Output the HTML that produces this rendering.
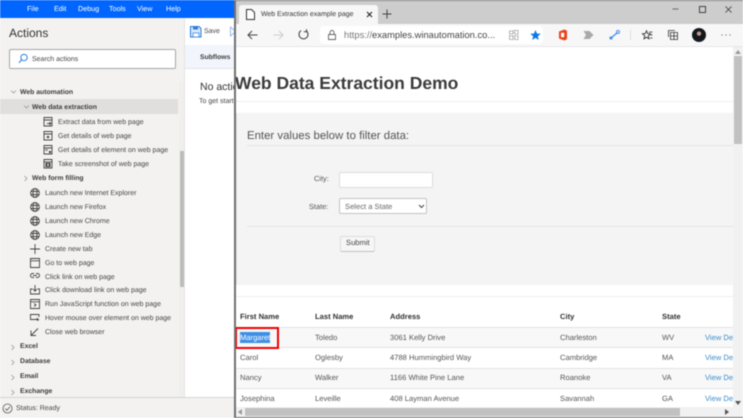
<!DOCTYPE html>
<html><head><meta charset="utf-8"><style>
html,body{margin:0;padding:0;background:#fff}
#w{width:743px;height:418px;overflow:hidden;position:relative;background:#fff;font-family:"Liberation Sans",sans-serif;filter:blur(.4px);text-rendering:geometricPrecision}
.a,.t{position:absolute}
.t{white-space:nowrap;line-height:12px}
.s{font-size:7px;color:#444;margin-top:1px}
.b{font-size:6.85px;color:#3c3c3c;font-weight:bold;margin-top:1px}
.p{font-size:7.6px;color:#555}
.h{font-size:7.6px;color:#333;font-weight:bold}
.l{font-size:7.6px;color:#3a8ccb}
svg{position:absolute;overflow:visible}
.i{fill:none;stroke:#444;stroke-width:.9}
</style></head><body><div id="w">
<!-- sidebar bg -->
<div class="a" style="left:0;top:0;width:185px;height:418px;background:#f3f2f1"></div>
<div class="a" style="left:185px;top:18px;width:50px;height:380px;background:#fff"></div>
<div class="a" style="left:0;top:0;width:743px;height:18px;background:#0066ff"></div>
<div class="t" style="left:27px;top:3px;font-size:7.2px;color:#fff">File</div>
<div class="t" style="left:54px;top:3px;font-size:7.2px;color:#fff">Edit</div>
<div class="t" style="left:78px;top:3px;font-size:7.2px;color:#fff">Debug</div>
<div class="t" style="left:109px;top:3px;font-size:7.2px;color:#fff">Tools</div>
<div class="t" style="left:137px;top:3px;font-size:7.2px;color:#fff">View</div>
<div class="t" style="left:166px;top:3px;font-size:7.2px;color:#fff">Help</div>
<div class="t" style="left:9px;top:26px;font-size:12px;line-height:14px;color:#333">Actions</div>
<div class="a" style="left:9px;top:49px;width:165px;height:18px;background:#fff;border:1px solid #a6a6a6;border-radius:2px"></div>
<svg style="left:18px;top:53px" width="10" height="11"><circle cx="6" cy="4.5" r="3.2" fill="none" stroke="#1a73d8" stroke-width=".9"/><path d="M3.6 6.8L1 9.8" stroke="#1a73d8" stroke-width="1"/></svg>
<div class="t s" style="left:32px;top:53px">Search actions</div>
<!-- tree -->
<div class="a" style="left:0;top:99px;width:178px;height:15px;background:#e1dfdd"></div>
<svg style="left:10px;top:89px" width="8" height="6"><path d="M1 1.5L3.5 4L6 1.5" fill="none" stroke="#999" stroke-width=".8"/></svg>
<div class="t b" style="left:20px;top:86px">Web automation</div>
<svg style="left:23px;top:104px" width="8" height="6"><path d="M1 1.5L3.5 4L6 1.5" fill="none" stroke="#999" stroke-width=".8"/></svg>
<div class="t b" style="left:32px;top:101px">Web data extraction</div>
<div class="t s" style="left:58px;top:116px">Extract data from web page</div>
<div class="t s" style="left:58px;top:130px">Get details of web page</div>
<div class="t s" style="left:58px;top:144px">Get details of element on web page</div>
<div class="t s" style="left:58px;top:158px">Take screenshot of web page</div>
<svg style="left:43px;top:117px" width="10" height="10"><path class="i" d="M1 .5H9V9H1ZM1 3H9M4 6.5H8M6.5 5L8 6.5L6.5 8"/></svg>
<svg style="left:43px;top:131px" width="10" height="10"><path class="i" d="M1 .5H9V9H1ZM1 3H9M5 4.5V7.5M3.5 6H6.5"/></svg>
<svg style="left:43px;top:145px" width="10" height="10"><path class="i" d="M1 .5H9V9H1ZM1 3H9"/><rect x="2" y="4" width="3" height="2" fill="#999"/><rect x="6" y="6" width="2" height="2" fill="#333"/></svg>
<svg style="left:43px;top:159px" width="10" height="10"><path class="i" d="M1 .5H9V9H1ZM1 3H9"/><rect x="2.5" y="4" width="5" height="4" fill="#333"/><circle cx="5" cy="6" r="1.1" fill="#ddd"/></svg>
<svg style="left:23px;top:175px" width="6" height="8"><path d="M1.5 1L4 3.5L1.5 6" fill="none" stroke="#999" stroke-width=".8"/></svg>
<div class="t b" style="left:32px;top:172px">Web form filling</div>
<div class="t s" style="left:45px;top:187px">Launch new Internet Explorer</div>
<div class="t s" style="left:45px;top:201px">Launch new Firefox</div>
<div class="t s" style="left:45px;top:215px">Launch new Chrome</div>
<div class="t s" style="left:45px;top:229px">Launch new Edge</div>
<div class="t s" style="left:45px;top:243px">Create new tab</div>
<div class="t s" style="left:45px;top:257px">Go to web page</div>
<div class="t s" style="left:45px;top:271px">Click link on web page</div>
<div class="t s" style="left:45px;top:284px">Click download link on web page</div>
<div class="t s" style="left:45px;top:298px">Run JavaScript function on web page</div>
<div class="t s" style="left:45px;top:312px">Hover mouse over element on web page</div>
<div class="t s" style="left:45px;top:326px">Close web browser</div>
<svg style="left:30px;top:188px" width="10" height="10"><g class="i" stroke-width=".8"><circle cx="5" cy="5" r="4.4"/><ellipse cx="5" cy="5" rx="2" ry="4.4"/><path d="M.8 3.5H9.2M.8 6.5H9.2"/></g></svg>
<svg style="left:30px;top:202px" width="10" height="10"><g class="i" stroke-width=".8"><circle cx="5" cy="5" r="4.4"/><ellipse cx="5" cy="5" rx="2" ry="4.4"/><path d="M.8 3.5H9.2M.8 6.5H9.2"/></g></svg>
<svg style="left:30px;top:216px" width="10" height="10"><g class="i" stroke-width=".8"><circle cx="5" cy="5" r="4.4"/><ellipse cx="5" cy="5" rx="2" ry="4.4"/><path d="M.8 3.5H9.2M.8 6.5H9.2"/></g></svg>
<svg style="left:30px;top:230px" width="10" height="10"><g class="i" stroke-width=".8"><circle cx="5" cy="5" r="4.4"/><ellipse cx="5" cy="5" rx="2" ry="4.4"/><path d="M.8 3.5H9.2M.8 6.5H9.2"/></g></svg>
<svg style="left:30px;top:244px" width="10" height="10"><path class="i" d="M0 5H10M5 0V10"/></svg>
<svg style="left:30px;top:258px" width="10" height="10"><path class="i" d="M.5 .5H9.5V9.5H.5ZM.5 2.8H9.5"/></svg>
<svg style="left:30px;top:272px" width="10" height="8"><path class="i" d="M4 1.5H2.5A2 2 0 0 0 2.5 5.5H4M6 1.5H7.5A2 2 0 0 1 7.5 5.5H6M3 3.5H7"/></svg>
<svg style="left:30px;top:285px" width="10" height="10"><path class="i" d="M5 0V6M3 4L5 6.2L7 4M2.5 4H.5V9H9.5V4H7.5"/></svg>
<svg style="left:30px;top:299px" width="10" height="10"><path class="i" d="M.5 .5H9.5V9.5H.5ZM.5 2.8H9.5M4 4.5L6 6L4 7.5"/></svg>
<svg style="left:30px;top:313px" width="10" height="10"><path class="i" d="M7 6.5H.5V1.5H9V4"/><path d="M6.5 4.5L9.5 7L8 7.3L7.5 8.5Z" fill="#333"/></svg>
<svg style="left:30px;top:327px" width="10" height="10"><path class="i" d="M8 1.5L1 8.5M1 3.5V8.5H6"/></svg>
<svg style="left:10px;top:344px" width="6" height="8"><path d="M1.5 1L4 3.5L1.5 6" fill="none" stroke="#999" stroke-width=".8"/></svg>
<div class="t b" style="left:20px;top:340px">Excel</div>
<svg style="left:10px;top:359px" width="6" height="8"><path d="M1.5 1L4 3.5L1.5 6" fill="none" stroke="#999" stroke-width=".8"/></svg>
<div class="t b" style="left:20px;top:355px">Database</div>
<svg style="left:10px;top:374px" width="6" height="8"><path d="M1.5 1L4 3.5L1.5 6" fill="none" stroke="#999" stroke-width=".8"/></svg>
<div class="t b" style="left:20px;top:370px">Email</div>
<svg style="left:10px;top:389px" width="6" height="8"><path d="M1.5 1L4 3.5L1.5 6" fill="none" stroke="#999" stroke-width=".8"/></svg>
<div class="t b" style="left:20px;top:385px">Exchange</div>
<!-- sidebar scrollbar -->
<div class="a" style="left:179px;top:81px;width:6px;height:317px;background:#f0efee"></div>
<div class="a" style="left:180px;top:151px;width:4px;height:136px;background:#bdbdbd"></div>
<div class="a" style="left:184px;top:18px;width:1px;height:380px;background:#e4e4e4"></div>
<!-- status -->
<div class="a" style="left:0;top:397px;width:235px;height:21px;background:#f3f2f1;border-top:1px solid #d4d4d4;box-sizing:border-box"></div>
<svg style="left:2px;top:403px" width="11" height="11"><circle cx="5.5" cy="5.5" r="4.5" fill="none" stroke="#555" stroke-width=".8"/><path d="M3.2 5.6L5 7.3L7.8 3.8" fill="none" stroke="#555" stroke-width=".8"/></svg>
<div class="t s" style="left:16px;top:402px">Status: Ready</div>
<!-- center -->
<svg style="left:190px;top:26px" width="12" height="12"><path d="M.5 .5H9L11 2.5V11H.5Z" fill="#d8e8fb" stroke="#2b7de0"/><rect x="3" y="7" width="6" height="4" fill="#fff" stroke="#2b7de0" stroke-width=".7"/><rect x="3" y="1" width="5" height="2.5" fill="#2b7de0"/></svg>
<div class="t s" style="left:204px;top:25px">Save</div>
<svg style="left:230px;top:26px" width="6" height="11"><path d="M.5 1L5.5 5.5L.5 10Z" fill="none" stroke="#8ab8ee" stroke-width=".9"/></svg>
<div class="a" style="left:185px;top:45px;width:50px;height:24px;background:#f2f6fc;border-bottom:1px solid #e3e3e3;box-sizing:border-box"></div>
<div class="t b" style="left:200px;top:51px">Subflows</div>
<div class="t" style="left:200px;top:81px;font-size:10.5px;color:#333">No actio</div>
<div class="t s" style="left:199px;top:95px">To get start</div>
<!-- browser -->
<div class="a" style="left:234px;top:0;width:2px;height:418px;background:#707070"></div>
<div class="a" style="left:236px;top:0;width:507px;height:418px;background:#fff;overflow:hidden">
<div class="a" style="left:0;top:0;width:507px;height:1px;background:#808080"></div>
<div class="a" style="left:0;top:1px;width:507px;height:23px;background:#cdcdcd"></div>
<div class="a" style="left:3px;top:5px;width:139px;height:19px;background:#f7f7f7;border-radius:3px 3px 0 0"></div>
<svg style="left:10px;top:9px" width="9" height="11"><path d="M.5 .5H5.5L8.5 3.5V10.5H.5Z" fill="#fff" stroke="#333"/></svg>
<div class="t" style="left:25px;top:8.5px;font-size:6.95px;color:#333">Web Extraction example page</div>
<svg style="left:130px;top:11px" width="7" height="7"><path d="M1 1L6 6M6 1L1 6" stroke="#222" stroke-width="1.1"/></svg>
<svg style="left:146px;top:9px" width="10" height="10"><path d="M5 .5V9.5M.5 5H9.5" stroke="#444" stroke-width="1"/></svg>
<svg style="left:436px;top:8px" width="8" height="2"><path d="M.5 1H6.5" stroke="#777" stroke-width="1.2"/></svg>
<div class="a" style="left:463px;top:6px;width:5px;height:5px;border:1px solid #444"></div>
<svg style="left:489px;top:6px" width="8" height="8"><path d="M.5 .5L6.5 6.5M6.5 .5L.5 6.5" stroke="#555" stroke-width=".9"/></svg>
<div class="a" style="left:0;top:24px;width:507px;height:23px;background:#f7f7f7;border-bottom:1px solid #e6e6e6;box-sizing:border-box"></div>
<svg style="left:11px;top:30px" width="11" height="10"><path d="M10.5 5H1M5 1L1 5L5 9" fill="none" stroke="#444" stroke-width="1"/></svg>
<svg style="left:37px;top:30px" width="11" height="10"><path d="M.5 5H10M6 1L10 5L6 9" fill="none" stroke="#ccc" stroke-width="1"/></svg>
<svg style="left:62px;top:29px" width="11" height="11"><path d="M3 1.6A4.5 4.5 0 1 0 8 1.6M8.5 .2V2.8H5.8" fill="none" stroke="#444" stroke-width="1"/></svg>
<div class="a" style="left:84px;top:26px;width:223px;height:18px;background:#fff;border-radius:4px"></div>
<svg style="left:92px;top:30px" width="8" height="10"><path d="M.5 4.5H7.5V9.5H.5ZM2 4.5V2.5A2 2 0 0 1 6 2.5V4.5" fill="none" stroke="#666" stroke-width=".9"/></svg>
<div class="t" style="left:108px;top:29px;font-size:9.35px;color:#444"><span style="color:#777">https://</span>examples.winautomation.co...</div>
<svg style="left:273px;top:30px" width="10" height="10"><path d="M.5 1H4V4H.5ZM5.5 .5H9V4H5.5ZM.5 6H4V9.5H.5ZM5.5 6H9V9.5H5.5Z" fill="none" stroke="#999" stroke-width="1" stroke-dasharray="1.5 .7"/></svg>
<svg style="left:294px;top:30px" width="11" height="10"><path d="M5.5 0L7 3.6L10.8 3.8L7.8 6.2L8.8 10L5.5 7.9L2.2 10L3.2 6.2L.2 3.8L4 3.6Z" fill="#0a78e6"/></svg>
<svg style="left:322px;top:29px" width="10" height="12"><path d="M1 2.5L6.5.5L9 1.8V10L6.5 11.5L1 9.5Z" fill="#e8431b"/><path d="M3 3.8H6.2V8.2H3Z" fill="#fff"/></svg>
<svg style="left:347px;top:31px" width="11" height="8"><path d="M.5 0H6.5L10.5 4L6.5 8H.5L3 4Z" fill="#aaa"/></svg>
<svg style="left:373px;top:30px" width="11" height="10"><path d="M2 8L8.5 2.5" stroke="#4f8ff0" stroke-width="1.4"/><circle cx="2" cy="8" r="1.6" fill="#4f8ff0"/><circle cx="9" cy="2" r="1.5" fill="none" stroke="#4f8ff0"/></svg>
<div class="a" style="left:394px;top:30px;width:1px;height:10px;background:#ddd"></div>
<svg style="left:406px;top:30px" width="11" height="10"><path d="M4.5 .8L5.7 3.6L8.5 3.8L6.3 5.8L7 8.8L4.5 7.2L2 8.8L2.7 5.8L.5 3.8L3.3 3.6Z" fill="none" stroke="#333" stroke-width=".9"/><path d="M7 2H10.5M8 5H10.5M8 8H10.5" stroke="#333" stroke-width=".8"/></svg>
<svg style="left:432px;top:30px" width="11" height="11"><path d="M2.5 2.5H9.5V9.5H2.5ZM2.5 6H9.5M6 2.5V9.5M.5 7V.5H7" fill="none" stroke="#333" stroke-width=".8"/></svg>
<div class="a" style="left:456px;top:28px;width:14px;height:14px;border-radius:50%;background:radial-gradient(circle at 50% 40%,#b89a88 0 18%,#14181c 22% 65%,#1c3d55 100%)"></div>
<svg style="left:485px;top:34px" width="10" height="2"><path d="M.5 1H1.5M4.5 1H5.5M8.5 1H9.5" stroke="#555" stroke-width="1"/></svg>
<!-- page -->
<div class="a" style="left:0;top:47px;width:497px;height:360px;overflow:hidden">
<div class="t" style="left:-1px;top:26px;font-size:17.5px;line-height:20px;font-weight:bold;color:#3b3b3b">Web Data Extraction Demo</div>
<div class="a" style="left:0;top:54px;width:497px;height:1px;background:#eee"></div>
<div class="a" style="left:0;top:66px;width:497px;height:172px;background:#f4f4f4;border-left:1px solid #e4e4e4;box-sizing:border-box"></div>
<div class="t" style="left:11px;top:82px;font-size:11.4px;line-height:14px;color:#555">Enter values below to filter data:</div>
<div class="a" style="left:11px;top:98px;width:486px;height:1px;background:#e5e5e5"></div>
<div class="t" style="left:78px;top:126px;font-size:7.4px;color:#555">City:</div>
<div class="a" style="left:103px;top:125px;width:94px;height:16px;background:#fff;border:1px solid #ddd;border-radius:2px;box-sizing:border-box"></div>
<div class="t" style="left:73px;top:154px;font-size:7.4px;color:#555">State:</div>
<div class="a" style="left:103px;top:151px;width:88px;height:16px;background:#fff;border:1px solid #c4c4c4;border-radius:2px;box-sizing:border-box"></div>
<div class="t" style="left:109px;top:154px;font-size:7.6px;color:#666">Select a State</div>
<svg style="left:182px;top:157px" width="7" height="5"><path d="M1 1L3.5 3.5L6 1" fill="none" stroke="#444" stroke-width="1"/></svg>
<div class="a" style="left:11px;top:179px;width:486px;height:1px;background:#e5e5e5"></div>
<div class="a" style="left:104px;top:189px;width:35px;height:16px;background:#f6f6f6;border:1px solid #ddd;border-bottom-color:#c0c0c0;border-radius:2px;box-sizing:border-box"></div>
<div class="t" style="left:110px;top:190px;font-size:7.6px;color:#444">Submit</div>
<div class="a" style="left:0;top:249px;width:497px;height:1px;background:#eee"></div>
<!-- table -->
<div class="t h" style="left:4px;top:264px">First Name</div>
<div class="t h" style="left:79px;top:264px">Last Name</div>
<div class="t h" style="left:154px;top:264px">Address</div>
<div class="t h" style="left:324px;top:264px">City</div>
<div class="t h" style="left:426px;top:264px">State</div>
<div class="a" style="left:0;top:280px;width:497px;height:21px;background:#f8f8f8;border-top:1px solid #e2e2e2;border-bottom:1px solid #e2e2e2;box-sizing:border-box"></div>
<div class="a" style="left:0;top:321px;width:497px;height:21px;background:#f8f8f8;border-top:1px solid #e2e2e2;border-bottom:1px solid #e2e2e2;box-sizing:border-box"></div>
<div class="a" style="left:4px;top:285px;width:30px;height:11px;background:#3c8fe6"></div>
<div class="t p" style="left:4px;top:284.5px;color:#fff">Margaret</div>
<div class="a" style="left:-1px;top:280px;width:44px;height:22px;border:2px solid #f00000;box-sizing:border-box"></div>
<div class="t p" style="left:79px;top:284.5px">Toledo</div>
<div class="t p" style="left:154px;top:284.5px">3061 Kelly Drive</div>
<div class="t p" style="left:324px;top:284.5px">Charleston</div>
<div class="t p" style="left:426px;top:284.5px">WV</div>
<div class="t l" style="left:469px;top:284.5px">View Details</div>
<div class="t p" style="left:4px;top:305px">Carol</div>
<div class="t p" style="left:79px;top:305px">Oglesby</div>
<div class="t p" style="left:154px;top:305px">4788 Hummingbird Way</div>
<div class="t p" style="left:324px;top:305px">Cambridge</div>
<div class="t p" style="left:426px;top:305px">MA</div>
<div class="t l" style="left:469px;top:305px">View Details</div>
<div class="t p" style="left:4px;top:325px">Nancy</div>
<div class="t p" style="left:79px;top:325px">Walker</div>
<div class="t p" style="left:154px;top:325px">1166 White Pine Lane</div>
<div class="t p" style="left:324px;top:325px">Roanoke</div>
<div class="t p" style="left:426px;top:325px">VA</div>
<div class="t l" style="left:469px;top:325px">View Details</div>
<div class="t p" style="left:4px;top:345.5px">Josephina</div>
<div class="t p" style="left:79px;top:345.5px">Leveille</div>
<div class="t p" style="left:154px;top:345.5px">408 Layman Avenue</div>
<div class="t p" style="left:324px;top:345.5px">Savannah</div>
<div class="t p" style="left:426px;top:345.5px">GA</div>
<div class="t l" style="left:469px;top:345.5px">View Details</div>
</div>
<!-- scrollbars -->
<div class="a" style="left:497px;top:47px;width:10px;height:360px;background:#f1f1f1"></div>
<div class="a" style="left:498px;top:56px;width:8px;height:88px;background:#c1c1c1"></div>
<svg style="left:499px;top:50px" width="6" height="4"><path d="M0 4L3 0L6 4Z" fill="#999"/></svg>
<svg style="left:499px;top:401px" width="6" height="4"><path d="M0 0L3 4L6 0Z" fill="#555"/></svg>
<div class="a" style="left:0;top:407px;width:507px;height:10px;background:#f1f1f1"></div>
<div class="a" style="left:9px;top:408px;width:435px;height:8px;background:#c1c1c1"></div>
<svg style="left:2px;top:409px" width="4" height="6"><path d="M4 0L0 3L4 6Z" fill="#999"/></svg>
<svg style="left:489px;top:409px" width="4" height="6"><path d="M0 0L4 3L0 6Z" fill="#555"/></svg>
<div class="a" style="left:0;top:417px;width:507px;height:1px;background:#707070"></div>
</div>
</div></body></html>
